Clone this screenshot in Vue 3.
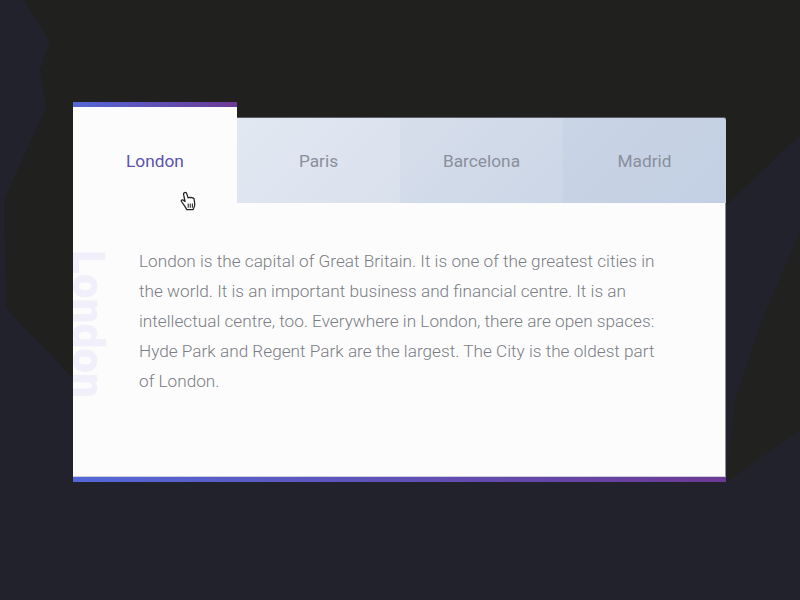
<script setup>
const tabs = [
  { name: 'London', cls: 'active' },
  { name: 'Paris', cls: 't1' },
  { name: 'Barcelona', cls: 't2' },
  { name: 'Madrid', cls: 't3' }
]
</script>

<template>
  <div class="page">
    <svg class="backdrop" viewBox="0 0 800 600" aria-hidden="true">
      <polygon points="24,0 800,0 800,135 726,205 73,378 6,308 4,200 46,108 40,70 50,42" fill="#20201e" />
      <polygon points="800,232 800,430 726,482 735,400 762,320" fill="#21211f" />
    </svg>
    <div class="card">
      <div class="tabs">
        <div v-for="t in tabs" :key="t.name" class="tab" :class="t.cls">{{ t.name }}</div>
      </div>
      <div class="content">
        <span class="ghost">London</span>
        <p class="text">London is the capital of Great Britain. It is one of the greatest cities in the world. It is an important business and financial centre. It is an intellectual centre, too. Everywhere in London, there are open spaces: Hyde Park and Regent Park are the largest. The City is the oldest part of London.</p>
      </div>
      <div class="bar"></div>
      <svg class="cursor" viewBox="0 0 16 20" aria-hidden="true">
        <path d="M4.200 1.600c.9-.5 1.800 0 2.100.9l1.300 4c.5-.7 1.500-.7 2 0 .5-.5 1.500-.5 2 .2.7-.3 1.500.1 1.700.9l.6 4.400c.2 1.600-.2 3-1 4.400l-.6 1.400H6.400l-2-3.400L1.300 10c-.6-.8.3-2 1.400-1.500l2 1.500L3.300 3.300c-.2-.7.3-1.400.9-1.700z" fill="#fff" stroke="#222" stroke-width="1.200" stroke-linejoin="round" />
        <path d="M7.700 12v4M9.700 12v4M11.700 12v4" stroke="#222" stroke-width="1" fill="none" />
      </svg>
    </div>
  </div>
</template>

<style scoped>
.page {
  position: relative;
  width: 800px;
  height: 600px;
  overflow: hidden;
  padding: 102px 0 0 73px;
  box-sizing: border-box;
  background: #22222c;
  font-family: Roboto, "Liberation Sans", sans-serif;
}
.backdrop {
  position: absolute;
  inset: 0;
  width: 800px;
  height: 600px;
}
.card {
  position: relative;
  width: 653px;
  display: flex;
  flex-direction: column;
}
.tabs {
  display: flex;
  align-items: flex-end;
  height: 101px;
}
.tab {
  flex: 0 0 163px;
  height: 85px;
  box-sizing: border-box;
  padding-top: 1px;
  display: flex;
  align-items: center;
  justify-content: center;
  font-size: 17.300px;
  color: #8a8f9c;
  box-shadow: 0 -1px 0 #5a5c66;
}
.tab.t3 { border-top-right-radius: 2px; }
.t1 { background: linear-gradient(135deg, #e2e8f2, #d9e1ed); }
.t2 { background: linear-gradient(135deg, #d6deeb, #ccd6e6); }
.t3 { background: linear-gradient(135deg, #c9d4e5, #c3cfe3); }
.tab.active {
  flex-basis: 164px;
  height: 101px;
  padding-top: 12px;
  background: #fcfcfd;
  color: #5b53ae;
  box-shadow: none;
  border-top: 5px solid;
  border-image: linear-gradient(90deg, #5468d8, #6c3a94) 1;
}
.content {
  position: relative;
  height: 274px;
  overflow: hidden;
  background: #fcfcfd;
  padding: 43px 0 0 66px;
  box-sizing: border-box;
  border-bottom: 1px solid #ccd0de;
  border-right: 1px solid #8d8e96;
}
.ghost {
  position: absolute;
  left: -7px;
  top: 47px;
  writing-mode: vertical-rl;
  font-size: 44px;
  font-weight: 900;
  line-height: 1;
  color: #f0effa;
}
.text {
  margin: 0;
  width: 528px;
  font-size: 17.200px;
  font-weight: 300;
  line-height: 30px;
  color: #7b7d84;
}
.bar {
  height: 5px;
  background: linear-gradient(90deg, #5468d8, #6c3a94);
}
.cursor {
  position: absolute;
  left: 107px;
  top: 89px;
  width: 17px;
  height: 21px;
}
</style>
